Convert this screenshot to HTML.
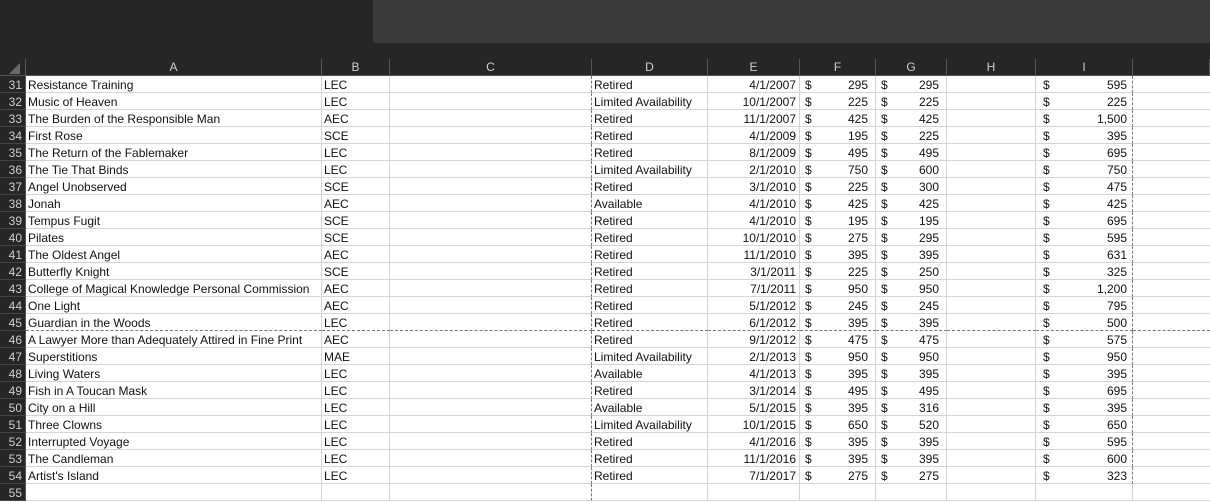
<!DOCTYPE html>
<html><head><meta charset="utf-8"><style>
*{margin:0;padding:0;box-sizing:border-box}
body{width:1210px;height:501px;overflow:hidden;background:#fff;font-family:"Liberation Sans",sans-serif;font-size:12px;color:#111;position:relative}
.top{position:absolute;left:0;top:0;width:1210px;height:59px;background:#262626}
.top2{position:absolute;left:373px;top:0;width:837px;height:43px;background:#3a3a3a}
.g{position:absolute;left:0;top:59px;display:grid;grid-template-columns:26px 296px 68px 202px 116px 92px 76px 71px 89px 97px 77px;grid-auto-rows:17px}
.g div{border-right:1px solid #d4d4d4;border-bottom:1px solid #d4d4d4;height:17px;line-height:18px;white-space:nowrap;overflow:visible;padding:0 2px}
.g .h{background:#262626;color:#cfcfcf;text-align:center;border-right:1px solid #555;border-bottom:1px solid #555;font-size:12px;line-height:16px}
.g .r{background:#262626;color:#cfcfcf;text-align:right;padding-right:3px;border-right:1px solid #555;border-bottom:1px solid #444}
.g .c{border-right:1px dashed #777}
.g .i{border-right:1px dashed #777}
.g .n{text-align:right;padding-right:3px}
.g .m{display:flex;justify-content:space-between;padding:0 7px 0 5px}
.g .im{padding:0 5px 0 7px}
.g .dl{border-bottom:1px dashed #777}
.g .j{border-right:none}
.corner{position:absolute;left:9px;top:63px;width:0;height:0;border-left:11px solid transparent;border-bottom:11px solid #6a6a6a}
</style></head><body>
<div class="top"></div><div class="top2"></div>
<div class="g" id="g">
<div class="h"></div><div class="h">A</div><div class="h">B</div><div class="h">C</div><div class="h">D</div><div class="h">E</div><div class="h">F</div><div class="h">G</div><div class="h">H</div><div class="h">I</div><div class="h"></div>
<div class="r">31</div><div>Resistance Training</div><div>LEC</div><div class="c"></div><div>Retired</div><div class="n">4/1/2007</div><div class="m"><span>$</span><span>295</span></div><div class="m"><span>$</span><span>295</span></div><div></div><div class="m im i"><span>$</span><span>595</span></div><div class="j"></div>
<div class="r">32</div><div>Music of Heaven</div><div>LEC</div><div class="c"></div><div>Limited Availability</div><div class="n">10/1/2007</div><div class="m"><span>$</span><span>225</span></div><div class="m"><span>$</span><span>225</span></div><div></div><div class="m im i"><span>$</span><span>225</span></div><div class="j"></div>
<div class="r">33</div><div>The Burden of the Responsible Man</div><div>AEC</div><div class="c"></div><div>Retired</div><div class="n">11/1/2007</div><div class="m"><span>$</span><span>425</span></div><div class="m"><span>$</span><span>425</span></div><div></div><div class="m im i"><span>$</span><span>1,500</span></div><div class="j"></div>
<div class="r">34</div><div>First Rose</div><div>SCE</div><div class="c"></div><div>Retired</div><div class="n">4/1/2009</div><div class="m"><span>$</span><span>195</span></div><div class="m"><span>$</span><span>225</span></div><div></div><div class="m im i"><span>$</span><span>395</span></div><div class="j"></div>
<div class="r">35</div><div>The Return of the Fablemaker</div><div>LEC</div><div class="c"></div><div>Retired</div><div class="n">8/1/2009</div><div class="m"><span>$</span><span>495</span></div><div class="m"><span>$</span><span>495</span></div><div></div><div class="m im i"><span>$</span><span>695</span></div><div class="j"></div>
<div class="r">36</div><div>The Tie That Binds</div><div>LEC</div><div class="c"></div><div>Limited Availability</div><div class="n">2/1/2010</div><div class="m"><span>$</span><span>750</span></div><div class="m"><span>$</span><span>600</span></div><div></div><div class="m im i"><span>$</span><span>750</span></div><div class="j"></div>
<div class="r">37</div><div>Angel Unobserved</div><div>SCE</div><div class="c"></div><div>Retired</div><div class="n">3/1/2010</div><div class="m"><span>$</span><span>225</span></div><div class="m"><span>$</span><span>300</span></div><div></div><div class="m im i"><span>$</span><span>475</span></div><div class="j"></div>
<div class="r">38</div><div>Jonah</div><div>AEC</div><div class="c"></div><div>Available</div><div class="n">4/1/2010</div><div class="m"><span>$</span><span>425</span></div><div class="m"><span>$</span><span>425</span></div><div></div><div class="m im i"><span>$</span><span>425</span></div><div class="j"></div>
<div class="r">39</div><div>Tempus Fugit</div><div>SCE</div><div class="c"></div><div>Retired</div><div class="n">4/1/2010</div><div class="m"><span>$</span><span>195</span></div><div class="m"><span>$</span><span>195</span></div><div></div><div class="m im i"><span>$</span><span>695</span></div><div class="j"></div>
<div class="r">40</div><div>Pilates</div><div>SCE</div><div class="c"></div><div>Retired</div><div class="n">10/1/2010</div><div class="m"><span>$</span><span>275</span></div><div class="m"><span>$</span><span>295</span></div><div></div><div class="m im i"><span>$</span><span>595</span></div><div class="j"></div>
<div class="r">41</div><div>The Oldest Angel</div><div>AEC</div><div class="c"></div><div>Retired</div><div class="n">11/1/2010</div><div class="m"><span>$</span><span>395</span></div><div class="m"><span>$</span><span>395</span></div><div></div><div class="m im i"><span>$</span><span>631</span></div><div class="j"></div>
<div class="r">42</div><div>Butterfly Knight</div><div>SCE</div><div class="c"></div><div>Retired</div><div class="n">3/1/2011</div><div class="m"><span>$</span><span>225</span></div><div class="m"><span>$</span><span>250</span></div><div></div><div class="m im i"><span>$</span><span>325</span></div><div class="j"></div>
<div class="r">43</div><div>College of Magical Knowledge Personal Commission</div><div>AEC</div><div class="c"></div><div>Retired</div><div class="n">7/1/2011</div><div class="m"><span>$</span><span>950</span></div><div class="m"><span>$</span><span>950</span></div><div></div><div class="m im i"><span>$</span><span>1,200</span></div><div class="j"></div>
<div class="r">44</div><div>One Light</div><div>AEC</div><div class="c"></div><div>Retired</div><div class="n">5/1/2012</div><div class="m"><span>$</span><span>245</span></div><div class="m"><span>$</span><span>245</span></div><div></div><div class="m im i"><span>$</span><span>795</span></div><div class="j"></div>
<div class="r">45</div><div class="dl">Guardian in the Woods</div><div class="dl">LEC</div><div class="c dl"></div><div class="dl">Retired</div><div class="n dl">6/1/2012</div><div class="m dl"><span>$</span><span>395</span></div><div class="m dl"><span>$</span><span>395</span></div><div class="dl"></div><div class="m im i dl"><span>$</span><span>500</span></div><div class="dl j"></div>
<div class="r">46</div><div>A Lawyer More than Adequately Attired in Fine Print</div><div>AEC</div><div class="c"></div><div>Retired</div><div class="n">9/1/2012</div><div class="m"><span>$</span><span>475</span></div><div class="m"><span>$</span><span>475</span></div><div></div><div class="m im i"><span>$</span><span>575</span></div><div class="j"></div>
<div class="r">47</div><div>Superstitions</div><div>MAE</div><div class="c"></div><div>Limited Availability</div><div class="n">2/1/2013</div><div class="m"><span>$</span><span>950</span></div><div class="m"><span>$</span><span>950</span></div><div></div><div class="m im i"><span>$</span><span>950</span></div><div class="j"></div>
<div class="r">48</div><div>Living Waters</div><div>LEC</div><div class="c"></div><div>Available</div><div class="n">4/1/2013</div><div class="m"><span>$</span><span>395</span></div><div class="m"><span>$</span><span>395</span></div><div></div><div class="m im i"><span>$</span><span>395</span></div><div class="j"></div>
<div class="r">49</div><div>Fish in A Toucan Mask</div><div>LEC</div><div class="c"></div><div>Retired</div><div class="n">3/1/2014</div><div class="m"><span>$</span><span>495</span></div><div class="m"><span>$</span><span>495</span></div><div></div><div class="m im i"><span>$</span><span>695</span></div><div class="j"></div>
<div class="r">50</div><div>City on a Hill</div><div>LEC</div><div class="c"></div><div>Available</div><div class="n">5/1/2015</div><div class="m"><span>$</span><span>395</span></div><div class="m"><span>$</span><span>316</span></div><div></div><div class="m im i"><span>$</span><span>395</span></div><div class="j"></div>
<div class="r">51</div><div>Three Clowns</div><div>LEC</div><div class="c"></div><div>Limited Availability</div><div class="n">10/1/2015</div><div class="m"><span>$</span><span>650</span></div><div class="m"><span>$</span><span>520</span></div><div></div><div class="m im i"><span>$</span><span>650</span></div><div class="j"></div>
<div class="r">52</div><div>Interrupted Voyage</div><div>LEC</div><div class="c"></div><div>Retired</div><div class="n">4/1/2016</div><div class="m"><span>$</span><span>395</span></div><div class="m"><span>$</span><span>395</span></div><div></div><div class="m im i"><span>$</span><span>595</span></div><div class="j"></div>
<div class="r">53</div><div>The Candleman</div><div>LEC</div><div class="c"></div><div>Retired</div><div class="n">11/1/2016</div><div class="m"><span>$</span><span>395</span></div><div class="m"><span>$</span><span>395</span></div><div></div><div class="m im i"><span>$</span><span>600</span></div><div class="j"></div>
<div class="r">54</div><div>Artist's Island</div><div>LEC</div><div class="c"></div><div>Retired</div><div class="n">7/1/2017</div><div class="m"><span>$</span><span>275</span></div><div class="m"><span>$</span><span>275</span></div><div></div><div class="m im i"><span>$</span><span>323</span></div><div class="j"></div>
<div class="r">55</div><div></div><div></div><div class="c"></div><div></div><div></div><div></div><div></div><div></div><div></div><div class="j"></div>
</div>
<div class="corner"></div>
</body></html>
